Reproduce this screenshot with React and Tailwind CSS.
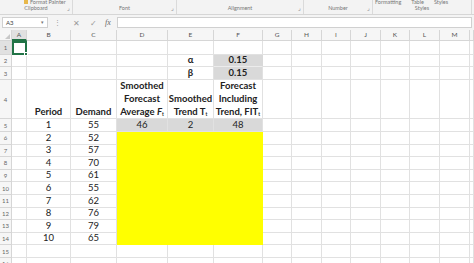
import React from "react";

const COLS = ["A", "B", "C", "D", "E", "F", "G", "H", "I", "J", "K", "L", "M", ""];
const DATA = [
  [1, 55], [2, 52], [3, 57], [4, 70], [5, 61],
  [6, 55], [7, 62], [8, 76], [9, 79], [10, 65],
];

const line = "border-r border-b border-[#e1e1e1]";

function Cell({ className = "", children }) {
  return (
    <div className={`${line} flex items-end justify-center leading-[12px] ${className}`}>
      {children}
    </div>
  );
}

function RowHead({ n, active }) {
  return (
    <div className={`border-r border-b border-[#d6d6d6] flex items-center justify-center text-[6px] text-[#666] ${active ? "bg-[#e1e1e1]" : "bg-[#f6f6f6]"}`}>
      {n}
    </div>
  );
}

function Blank({ n }) {
  return Array.from({ length: n }).map((_, i) => <Cell key={i} />);
}

function Launcher() {
  return <span className="text-[6px] text-[#888] leading-none">⌟</span>;
}

export default function App() {
  return (
    <div className="w-[474px] h-[263px] overflow-hidden bg-white" style={{ fontFamily: "Lato, 'Noto Sans', sans-serif" }}>
      {/* ribbon */}
      <div className="h-[15px] bg-[#f3f3f3] border-b border-[#d6d6d6] flex text-[5.5px] text-[#777]">
        <div className="w-[73px] border-r border-[#dadada] relative flex items-end justify-center pb-[2px]">
          <div className="absolute top-[-2px] left-[24px] flex items-center gap-[2px]">
            <span className="w-[4px] h-[4px] bg-[#e8b84a] inline-block"></span>
            <span>Format Painter</span>
          </div>
          <span>Clipboard</span>
          <span className="absolute right-[2px] bottom-[2px]"><Launcher /></span>
        </div>
        <div className="w-[104px] border-r border-[#dadada] relative flex items-end justify-center pb-[2px]">
          <span>Font</span>
          <span className="absolute right-[2px] bottom-[2px]"><Launcher /></span>
        </div>
        <div className="w-[127px] border-r border-[#dadada] relative flex items-end justify-center pb-[2px]">
          <span>Alignment</span>
          <span className="absolute right-[2px] bottom-[2px]"><Launcher /></span>
        </div>
        <div className="w-[69px] border-r border-[#dadada] relative flex items-end justify-center pb-[2px]">
          <span>Number</span>
          <span className="absolute right-[2px] bottom-[2px]"><Launcher /></span>
        </div>
        <div className="w-[99px] border-r border-[#dadada] relative flex items-end justify-center pb-[2px]">
          <div className="absolute top-[-2px] left-[2px] flex gap-[10px]">
            <span>Formatting</span>
            <span>Table</span>
            <span>Styles</span>
          </div>
          <span>Styles</span>
        </div>
      </div>

      {/* formula bar */}
      <div className="h-[15px] bg-[#f4f4f4] flex items-center px-[2px] text-[#999]">
        <div className="w-[46px] h-[11px] bg-white border border-[#d0d0d0] flex items-center justify-between px-[3px] text-[6px] text-[#444]">
          <span>A3</span>
          <span className="text-[5px] text-[#777]">▾</span>
        </div>
        <span className="ml-[6px] text-[7px] leading-none">⋮</span>
        <span className="ml-[12px] text-[8px] leading-none">✕</span>
        <span className="ml-[10px] text-[8px] leading-none">✓</span>
        <span className="ml-[8px] text-[8px] italic text-[#666]" style={{ fontFamily: "'Liberation Serif', serif" }}>fx</span>
        <div className="ml-[6px] flex-1 h-[11px] bg-white border border-[#d0d0d0]"></div>
      </div>

      {/* sheet */}
      <div className="grid text-[9.5px] text-[#222] grid-cols-[12px_15px_44px_46px_51px_46px_49px_29px_30px_29px_30px_29px_30px_30px_4px] grid-rows-[11px_14px_12px_13px_39px_13px_repeat(12,12.6px)]">
        {/* column header */}
        <div className="bg-[#f6f6f6] border-r border-b border-[#d6d6d6] relative">
          <span className="absolute right-[1px] bottom-[1px] w-0 h-0 border-l-[5px] border-l-transparent border-b-[5px] border-b-[#c8c8c8]"></span>
        </div>
        {COLS.map((c, i) => (
          <div
            key={i}
            className={`border-r border-[#d6d6d6] flex items-center justify-center text-[6.5px] text-[#555] ${i === 0 ? "bg-[#e1e1e1] border-b-2 border-b-[#217346]" : "bg-[#f6f6f6] border-b"}`}
          >
            {c}
          </div>
        ))}

        {/* row 1 */}
        <RowHead n={1} active />
        <div className="border-2 border-[#217346] relative">
          <span className="absolute right-[-3px] bottom-[-3px] w-[4px] h-[4px] bg-[#217346] border border-white"></span>
        </div>
        <Blank n={13} />

        {/* row 2 */}
        <RowHead n={2} />
        <Blank n={4} />
        <Cell className="font-bold">α</Cell>
        <Cell className="bg-[#d9d9d9] border-r-[#d9d9d9] border-b-[#ececec] font-bold">0.15</Cell>
        <Blank n={8} />

        {/* row 3 */}
        <RowHead n={3} />
        <Blank n={4} />
        <Cell className="font-bold">β</Cell>
        <Cell className="bg-[#d9d9d9] border-[#d9d9d9] font-bold">0.15</Cell>
        <Blank n={8} />

        {/* row 4 */}
        <RowHead n={4} />
        <Cell />
        <Cell className="font-bold leading-[13px]">Period</Cell>
        <Cell className="font-bold leading-[13px]">Demand</Cell>
        <Cell className="font-bold leading-[13px] text-center">
          <div>
            Smoothed<br />Forecast<br />Average <i>F</i><sub className="text-[5px]">t</sub>
          </div>
        </Cell>
        <Cell className="font-bold leading-[13px] text-center">
          <div>
            Smoothed<br />Trend T<sub className="text-[5px]">t</sub>
          </div>
        </Cell>
        <Cell className="font-bold leading-[13px] text-center">
          <div>
            Forecast<br />Including<br />Trend, FIT<sub className="text-[5px]">t</sub>
          </div>
        </Cell>
        <Blank n={8} />

        {/* row 5 */}
        <RowHead n={5} />
        <Cell />
        <Cell>1</Cell>
        <Cell>55</Cell>
        <Cell className="bg-[#d9d9d9] border-[#d9d9d9]">46</Cell>
        <Cell className="bg-[#d9d9d9] border-[#d9d9d9]">2</Cell>
        <Cell className="bg-[#d9d9d9] border-[#d9d9d9]">48</Cell>
        <Blank n={8} />

        {/* rows 6-14 */}
        {DATA.slice(1).map(([p, d], i) => (
          <React.Fragment key={p}>
            <RowHead n={i + 6} />
            <Cell />
            <Cell>{p}</Cell>
            <Cell>{d}</Cell>
            <Cell className="bg-[#ffff00] border-[#ffff00]" />
            <Cell className="bg-[#ffff00] border-[#ffff00]" />
            <Cell className="bg-[#ffff00] border-[#ffff00]" />
            <Blank n={8} />
          </React.Fragment>
        ))}

        {/* rows 15-16 */}
        {[15, 16].map((n) => (
          <React.Fragment key={n}>
            <RowHead n={n} />
            <Blank n={14} />
          </React.Fragment>
        ))}
      </div>
    </div>
  );
}
